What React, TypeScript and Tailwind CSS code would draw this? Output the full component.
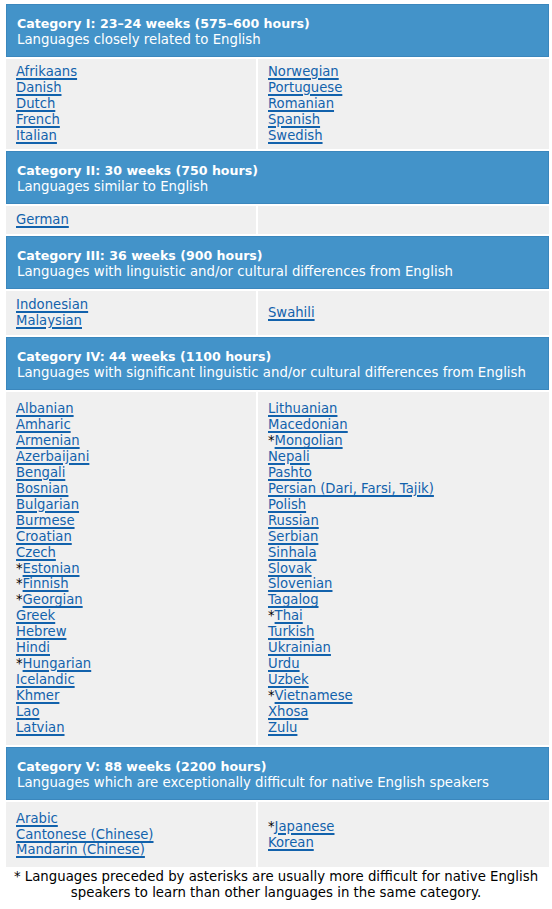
const font = { fontFamily: '"DejaVu Sans", Verdana, sans-serif' };

type Lang = { name: string; star?: boolean };

const L = (list: string): Lang[] =>
  list.split("|").map((s) =>
    s.startsWith("*") ? { name: s.slice(1), star: true } : { name: s }
  );

const categories: {
  title: string;
  sub: string;
  h: string;
  left: Lang[];
  right: Lang[];
}[] = [
  {
    title: "Category I: 23–24 weeks (575–600 hours)",
    sub: "Languages closely related to English",
    h: "h-[90px]",
    left: L("Afrikaans|Danish|Dutch|French|Italian"),
    right: L("Norwegian|Portuguese|Romanian|Spanish|Swedish"),
  },
  {
    title: "Category II: 30 weeks (750 hours)",
    sub: "Languages similar to English",
    h: "h-[28px]",
    left: L("German"),
    right: [],
  },
  {
    title: "Category III: 36 weeks (900 hours)",
    sub: "Languages with linguistic and/or cultural differences from English",
    h: "h-[44px]",
    left: L("Indonesian|Malaysian"),
    right: L("Swahili"),
  },
  {
    title: "Category IV: 44 weeks (1100 hours)",
    sub: "Languages with significant linguistic and/or cultural differences from English",
    h: "h-[353px]",
    left: L(
      "Albanian|Amharic|Armenian|Azerbaijani|Bengali|Bosnian|Bulgarian|Burmese|Croatian|Czech|*Estonian|*Finnish|*Georgian|Greek|Hebrew|Hindi|*Hungarian|Icelandic|Khmer|Lao|Latvian"
    ),
    right: L(
      "Lithuanian|Macedonian|*Mongolian|Nepali|Pashto|Persian (Dari, Farsi, Tajik)|Polish|Russian|Serbian|Sinhala|Slovak|Slovenian|Tagalog|*Thai|Turkish|Ukrainian|Urdu|Uzbek|*Vietnamese|Xhosa|Zulu"
    ),
  },
  {
    title: "Category V: 88 weeks (2200 hours)",
    sub: "Languages which are exceptionally difficult for native English speakers",
    h: "h-[65px]",
    left: L("Arabic|Cantonese (Chinese)|Mandarin (Chinese)"),
    right: L("*Japanese|Korean"),
  },
];

function Cell({ langs, w }: { langs: Lang[]; w: string }) {
  return (
    <td className={`${w} bg-[#f0f0f0] px-[10px] py-0 align-middle`}>
      {langs.map((l) => (
        <div key={l.name}>
          {l.star && <span className="text-black">*</span>}
          <a
            href="#"
            className="text-[#1262ac] underline decoration-[1.5px] underline-offset-2"
          >
            {l.name}
          </a>
        </div>
      ))}
    </td>
  );
}

export default function App() {
  return (
    <div className="w-[552px] min-h-[909px] bg-white pt-[2px]" style={font}>
      <table className="ml-[4px] w-[547px] border-separate border-spacing-[2px] text-[13.2px] leading-[15.9px]">
        <tbody>
          {categories.map((c) => (
            <>
              <tr key={c.title} className="h-[53px]">
                <th
                  colSpan={2}
                  className="bg-[#4393c9] border border-[#3b87bd] px-[10px] pt-[3px] pb-0 text-left align-middle font-normal text-white leading-[16.5px]"
                >
                  <div className="font-bold text-[12.6px]">{c.title}</div>
                  <div className="text-[13.3px]">{c.sub}</div>
                </th>
              </tr>
              <tr key={c.title + "-body"} className={c.h}>
                <Cell langs={c.left} w="w-[250px]" />
                <Cell langs={c.right} w="w-[291px]" />
              </tr>
            </>
          ))}
        </tbody>
      </table>
      <p className="px-2 text-center text-[13.3px] leading-4 text-black">
        * Languages preceded by asterisks are usually more difficult for native English
        speakers to learn than other languages in the same category.
      </p>
    </div>
  );
}
